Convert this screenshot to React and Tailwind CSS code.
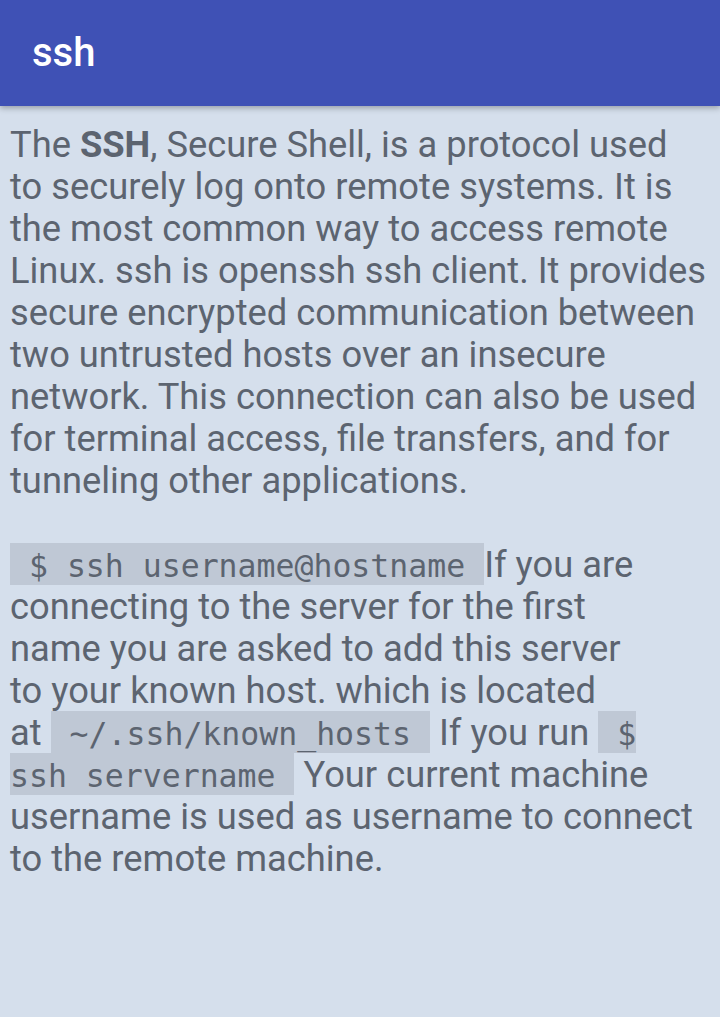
export default function App() {
  const code = "bg-[#bfc8d5] pt-[5px] pb-[0.5px] leading-none font-['DejaVu_Sans_Mono',monospace] text-[31.5px]";
  return (
    <div className="w-[720px] h-[1017px] bg-[#d5dfec] font-['Roboto',sans-serif] overflow-hidden">
      <div className="relative z-10 h-[106px] bg-[#3f51b5] flex items-center pl-[32px] shadow-[0_2px_6px_rgba(0,0,0,0.3)]">
        <span className="text-white text-[40px] font-medium leading-none">ssh</span>
      </div>
      <div className="pl-[10px] pt-[18px] text-[36.3px] leading-[42px] text-[#5c6470] whitespace-nowrap">
        <p className="mb-[42px]">
          The <b className="font-bold">SSH</b>, Secure Shell, is a protocol used<br />
          to securely log onto remote systems. It is<br />
          the most common way to access remote<br />
          Linux. ssh is openssh ssh client. It provides<br />
          secure encrypted communication between<br />
          two untrusted hosts over an insecure<br />
          network. This connection can also be used<br />
          for terminal access, file transfers, and for<br />
          tunneling other applications.
        </p>
        <p>
          <span className={code}>{"\u00a0$ ssh username@hostname\u00a0"}</span>If you are<br />
          connecting to the server for the first<br />
          name you are asked to add this server<br />
          to your known host. which is located<br />
          at <span className={code}>{"\u00a0~/.ssh/known_hosts\u00a0"}</span> If you run <span className={code}>{"\u00a0$"}<br />{"ssh servername\u00a0"}</span> Your current machine<br />
          username is used as username to connect<br />
          to the remote machine.
        </p>
      </div>
    </div>
  );
}
